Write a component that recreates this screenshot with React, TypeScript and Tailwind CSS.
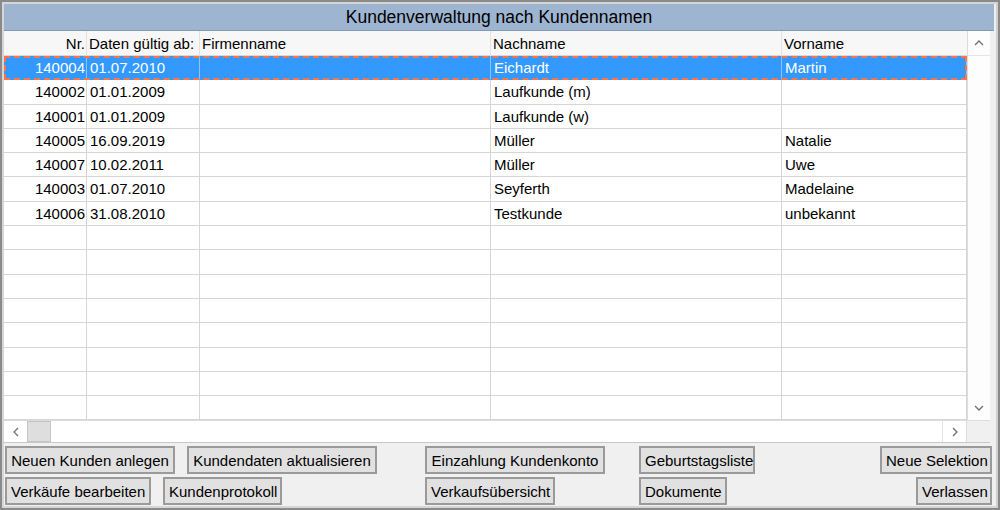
import React from 'react';

type Kunde = { nr: string; datum: string; firma: string; nachname: string; vorname: string };

const kunden: Kunde[] = [
  { nr: '140004', datum: '01.07.2010', firma: '', nachname: 'Eichardt', vorname: 'Martin' },
  { nr: '140002', datum: '01.01.2009', firma: '', nachname: 'Laufkunde (m)', vorname: '' },
  { nr: '140001', datum: '01.01.2009', firma: '', nachname: 'Laufkunde (w)', vorname: '' },
  { nr: '140005', datum: '16.09.2019', firma: '', nachname: 'Müller', vorname: 'Natalie' },
  { nr: '140007', datum: '10.02.2011', firma: '', nachname: 'Müller', vorname: 'Uwe' },
  { nr: '140003', datum: '01.07.2010', firma: '', nachname: 'Seyferth', vorname: 'Madelaine' },
  { nr: '140006', datum: '31.08.2010', firma: '', nachname: 'Testkunde', vorname: 'unbekannt' },
];

const rows: (Kunde | null)[] = [...kunden, ...Array(8).fill(null)];

const Chevron: React.FC<{ dir: 'up' | 'down' | 'left' | 'right' }> = ({ dir }) => {
  const pts = {
    up: '1,6 5,2 9,6',
    down: '1,2 5,6 9,2',
    left: '6,1 2,5 6,9',
    right: '2,1 6,5 2,9',
  }[dir];
  const horiz = dir === 'up' || dir === 'down';
  return (
    <svg width={horiz ? 10 : 8} height={horiz ? 8 : 10} viewBox={horiz ? '0 0 10 8' : '0 0 8 10'}>
      <polyline points={pts} fill="none" stroke="#707070" strokeWidth="1.3" />
    </svg>
  );
};

const Btn: React.FC<{ label: string; className?: string }> = ({ label, className = '' }) => (
  <button
    className={`h-[28px] border-2 border-[#9a9a9a] bg-[#e1e1e1] text-[15px] leading-none text-black whitespace-nowrap px-1 ${className}`}
  >
    {label}
  </button>
);

const cols = 'grid grid-cols-[83px_113px_291px_291px_185px]';

export default function App() {
  return (
    <div
      className="w-[1000px] h-[510px] border-2 border-[#8a8a8a] bg-[#f0f0f0] overflow-hidden"
      style={{ fontFamily: '"Liberation Sans", Arial, sans-serif' }}
    >
      <div className="h-full border-2 border-[#d6d6d6] border-r-[#cfcfcf] flex flex-col">
        {/* title */}
        <div className="h-[27px] bg-[#9eb5d2] border-b border-[#8199b6] text-center text-[17.5px] leading-[26px] text-black mr-[2px]">
          Kundenverwaltung nach Kundennamen
        </div>

        {/* table + vertical scroll */}
        <div className="flex bg-white mr-[6px]">
          <div className="w-[963px]">
            <div className={`${cols} h-[25px] bg-[#f7f7f7] border-b border-[#d8d8d8] text-[15px] leading-[25px] text-black`}>
              <div className="text-right pr-[1px] border-r border-[#e2e2e2]">Nr.</div>
              <div className="pl-[2px] border-r border-[#e2e2e2]">Daten gültig ab:</div>
              <div className="pl-[2px] border-r border-[#e2e2e2]">Firmenname</div>
              <div className="pl-[2px] border-r border-[#e2e2e2]">Nachname</div>
              <div className="pl-[2px]">Vorname</div>
            </div>
            {rows.map((r, i) => {
              const sel = i === 0;
              const cell = `h-[24.3px] leading-[24px] border-b ${sel ? 'border-[#3399ff] border-r-[#8cc4ff]' : 'border-[#d6d6d6]'} border-r whitespace-nowrap overflow-hidden`;
              return (
                <div
                  key={i}
                  className={`${cols} relative text-[15px] ${sel ? 'bg-[#3399ff] text-white' : 'text-black'}`}
                >
                  <div className={`${cell} text-right pr-[1px]`}>{r?.nr}</div>
                  <div className={`${cell} pl-[3px]`}>{r?.datum}</div>
                  <div className={`${cell} pl-[3px]`}>{r?.firma}</div>
                  <div className={`${cell} pl-[3px]`}>{r?.nachname}</div>
                  <div className={`${cell} pl-[3px]`}>{r?.vorname}</div>
                  {sel && (
                    <div className="absolute inset-0 border-2 border-dashed border-[#ff7448] pointer-events-none" />
                  )}
                </div>
              );
            })}
          </div>
          <div className="w-[23px] flex flex-col border-l border-[#dcdcdc] bg-[#fdfdfd]">
            <div className="h-[25px] flex items-center justify-center border-b border-[#e4e4e4]">
              <Chevron dir="up" />
            </div>
            <div className="flex-1" />
            <div className="h-[24px] flex items-center justify-center">
              <Chevron dir="down" />
            </div>
          </div>
        </div>

        {/* horizontal scroll */}
        <div className="h-[23px] flex border-t border-[#dcdcdc] border-b border-b-[#c8c8c8] bg-white mr-[6px]">
          <div className="w-[23px] flex items-center justify-center">
            <Chevron dir="left" />
          </div>
          <div className="w-[24px] bg-[#dedede] border border-[#c4c4c4]" />
          <div className="flex-1" />
          <div className="w-[24px] flex items-center justify-center border-l border-[#e4e4e4]">
            <Chevron dir="right" />
          </div>
          <div className="w-[24px] bg-[#f0f0f0] border-l border-[#dcdcdc]" />
        </div>

        {/* buttons */}
        <div className="flex-1 flex flex-col gap-[3px] pt-[3px] pr-[4px]">
          <div className="flex">
            <Btn label="Neuen Kunden anlegen" className="ml-[1px] w-[170px]" />
            <Btn label="Kundendaten aktualisieren" className="ml-[12px] w-[190px]" />
            <Btn label="Einzahlung Kundenkonto" className="ml-[48px] w-[180px]" />
            <Btn label="Geburtstagsliste" className="ml-[34px] w-[116px]" />
            <Btn label="Neue Selektion" className="ml-auto w-[112px]" />
          </div>
          <div className="flex">
            <Btn label="Verkäufe bearbeiten" className="ml-[1px] w-[146px]" />
            <Btn label="Kundenprotokoll" className="ml-[12px] w-[119px]" />
            <Btn label="Verkaufsübersicht" className="ml-[143px] w-[130px]" />
            <Btn label="Dokumente" className="ml-[84px] w-[88px]" />
            <Btn label="Verlassen" className="ml-auto w-[76px]" />
          </div>
        </div>
      </div>
    </div>
  );
}
